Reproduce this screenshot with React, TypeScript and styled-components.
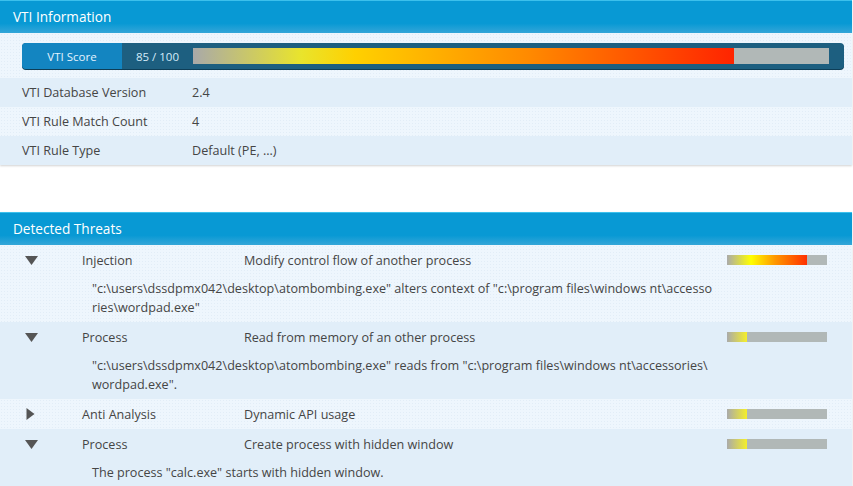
import styled, { createGlobalStyle } from "styled-components";

const GlobalStyle = createGlobalStyle`
  html, body {
    margin: 0;
    padding: 0;
    background: #ffffff;
  }
  body {
    font-family: "Open Sans", "Noto Sans", sans-serif;
    font-size: 12.6px;
    color: #454545;
  }
`;

const Page = styled.div`
  width: 852px;
  display: flex;
  flex-direction: column;
  gap: 47px;
`;

const Panel = styled.section`
  background: #eef6fd;
  box-shadow: 0 1px 2px rgba(0, 0, 0, 0.18);
`;

const PanelHeader = styled.header`
  height: 33px;
  box-sizing: border-box;
  border-top: 1px solid #3cc0ec;
  background: linear-gradient(#0899d4 0%, #0899d4 70%, #34a6d8 100%);
  color: #ffffff;
  font-size: 13.6px;
  line-height: 32px;
  padding-left: 13px;
`;

const Dotted = styled.div<{ $dark?: boolean }>`
  background-color: ${({ $dark }) => ($dark ? "#e1eef9" : "#eef6fd")};
  background-image: ${({ $dark }) =>
    $dark ? "none" : "radial-gradient(#e2edf7 0.6px, transparent 0.7px)"};
  background-size: 3px 3px;
`;

const ScoreRow = styled(Dotted)`
  padding: 10px 8px 9px 22px;
`;

const ScoreBar = styled.div`
  display: flex;
  align-items: center;
  height: 26px;
  background: #1d5f80;
  border-radius: 4px;
  box-shadow: 0 1px 0 #0e3e57;
  overflow: hidden;
  padding-right: 15px;
`;

const ScoreLabel = styled.div`
  width: 100px;
  align-self: stretch;
  background: #1385c1;
  color: #e4f3ff;
  font-size: 11.5px;
  display: flex;
  align-items: center;
  justify-content: center;
`;

const ScoreValue = styled.div`
  width: 71px;
  color: #d4ecfa;
  font-size: 11.5px;
  text-align: center;
`;

const Track = styled.div<{ $h: number }>`
  flex: 1;
  height: ${({ $h }) => $h}px;
  background: #b1b8b7;
  display: flex;
`;

const Fill = styled.div<{ $stops: string }>`
  height: 100%;
  background: linear-gradient(to right, ${({ $stops }) => $stops});
`;

const InfoRow = styled(Dotted)`
  display: grid;
  grid-template-columns: 170px 1fr;
  height: 29px;
  align-items: center;
  padding-left: 22px;
`;

const ThreatRow = styled(Dotted)``;

const ThreatHead = styled.div`
  display: grid;
  grid-template-columns: 82px 162px 1fr 100px;
  height: 30px;
  align-items: center;
  padding-right: 25px;
`;

const Toggle = styled.div`
  display: flex;
  justify-content: center;
  width: 62px;
`;

const ThreatTrack = styled.div`
  width: 100px;
  height: 10px;
  background: #b1b8b7;
  display: flex;
`;

const Detail = styled.div`
  padding: 4px 137px 5px 92px;
  line-height: 19px;
  word-break: break-all;
  line-break: anywhere;
`;

const SCORE_STOPS = "#a9a9a9 0%, #e9e42c 20%, #ffd000 30%, #ff8a00 62%, #ff2400 100%";
const HIGH_STOPS = "#aaaaaa 0%, #ffff00 30%, #ff9800 60%, #ff3000 100%";
const LOW_STOPS = "#aaaaaa 0%, #f5ef2a 100%";

const DownArrow = () => (
  <svg width="13" height="9" viewBox="0 0 13 9">
    <polygon points="0,0 13,0 6.5,9" fill="#555555" />
  </svg>
);

const RightArrow = () => (
  <svg width="13" height="12" viewBox="0 0 13 12">
    <polygon points="1.5,0 9.5,6 1.5,12" fill="#555555" />
  </svg>
);

const threats = [
  {
    open: true,
    category: "Injection",
    text: "Modify control flow of another process",
    level: 80,
    stops: HIGH_STOPS,
    detail:
      '"c:\\users\\dssdpmx042\\desktop\\atombombing.exe" alters context of "c:\\program files\\windows nt\\accessories\\wordpad.exe"',
  },
  {
    open: true,
    category: "Process",
    text: "Read from memory of an other process",
    level: 20,
    stops: LOW_STOPS,
    detail:
      '"c:\\users\\dssdpmx042\\desktop\\atombombing.exe" reads from "c:\\program files\\windows nt\\accessories\\wordpad.exe".',
  },
  {
    open: false,
    category: "Anti Analysis",
    text: "Dynamic API usage",
    level: 20,
    stops: LOW_STOPS,
    detail: "",
  },
  {
    open: true,
    category: "Process",
    text: "Create process with hidden window",
    level: 20,
    stops: LOW_STOPS,
    detail: 'The process "calc.exe" starts with hidden window.',
  },
];

export default function App() {
  return (
    <>
      <GlobalStyle />
      <Page>
        <Panel>
          <PanelHeader>VTI Information</PanelHeader>
          <ScoreRow>
            <ScoreBar>
              <ScoreLabel>VTI Score</ScoreLabel>
              <ScoreValue>85 / 100</ScoreValue>
              <Track $h={16}>
                <Fill $stops={SCORE_STOPS} style={{ width: "85%" }} />
              </Track>
            </ScoreBar>
          </ScoreRow>
          <InfoRow $dark>
            <span>VTI Database Version</span>
            <span>2.4</span>
          </InfoRow>
          <InfoRow>
            <span>VTI Rule Match Count</span>
            <span>4</span>
          </InfoRow>
          <InfoRow $dark>
            <span>VTI Rule Type</span>
            <span>Default (PE, ...)</span>
          </InfoRow>
        </Panel>

        <Panel>
          <PanelHeader>Detected Threats</PanelHeader>
          {threats.map((t, i) => (
            <ThreatRow key={i} $dark={i % 2 === 1}>
              <ThreatHead>
                <Toggle>{t.open ? <DownArrow /> : <RightArrow />}</Toggle>
                <span>{t.category}</span>
                <span>{t.text}</span>
                <ThreatTrack>
                  <Fill $stops={t.stops} style={{ width: `${t.level}%` }} />
                </ThreatTrack>
              </ThreatHead>
              {t.open && t.detail && <Detail>{t.detail}</Detail>}
            </ThreatRow>
          ))}
        </Panel>
      </Page>
    </>
  );
}
